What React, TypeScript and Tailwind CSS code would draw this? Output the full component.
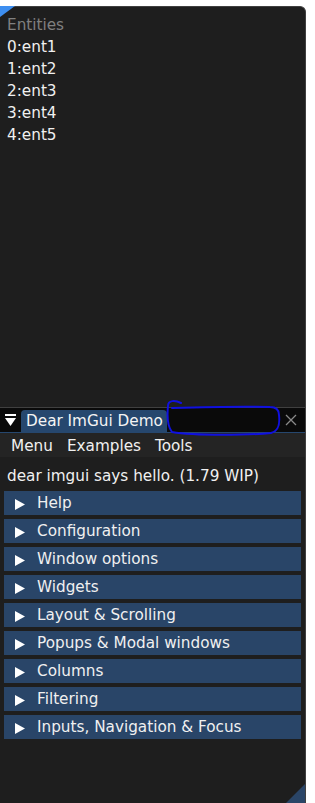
import React from "react";

const headers = [
  "Help",
  "Configuration",
  "Window options",
  "Widgets",
  "Layout & Scrolling",
  "Popups & Modal windows",
  "Columns",
  "Filtering",
  "Inputs, Navigation & Focus",
];

function Arrow() {
  return (
    <svg width="10" height="11" viewBox="0 0 10 11" className="shrink-0">
      <polygon points="0,0 10,5.5 0,11" fill="#ffffff" />
    </svg>
  );
}

export default function App() {
  return (
    <div className="relative w-[315px] h-[803px] bg-white overflow-hidden font-['DejaVu_Sans',sans-serif] text-[15.25px] text-[#f0f0f0]">
      <div className="h-[6px]" />
      {/* Top window */}
      <div className="relative w-[306px] h-[402px] bg-[#1e1e1e] border-t border-r border-b border-[#404040] rounded-tr-[6px] pt-[7px] pl-[7px] leading-[22px]">
        <div className="text-[#808080]">Entities</div>
        <div>0:ent1</div>
        <div>1:ent2</div>
        <div>2:ent3</div>
        <div>3:ent4</div>
        <div>4:ent5</div>
        <svg className="absolute left-0 top-[-1px]" width="16" height="12" viewBox="0 0 16 12">
          <polygon points="0,0 15,0 0,11" fill="#3d8ef0" />
        </svg>
      </div>
      {/* Bottom window */}
      <div className="relative w-[306px] h-[395px] bg-[#1e1e1e] border-r border-[#404040] flex flex-col">
        <div className="h-[24px] bg-[#0a0a0a] flex items-end shrink-0 pr-[6px]">
          <div className="w-[21px] h-[24px] flex flex-col items-center justify-center gap-[2px]">
            <div className="w-[11px] h-[2px] bg-white" />
            <svg width="11" height="8" viewBox="0 0 11 8">
              <polygon points="0,0 11,0 5.5,8" fill="#ffffff" />
            </svg>
          </div>
          <div className="h-[22px] w-[146px] bg-[#26476e] rounded-t-[4px] pl-[5px] flex items-center leading-none text-[#f4f4f4] pt-[1px]">
            Dear ImGui Demo
          </div>
          <div className="flex-1" />
          <div className="h-[24px] w-[16px] flex items-center justify-center">
            <svg width="12" height="12" viewBox="0 0 12 12">
              <path d="M1 1 L11 11 M11 1 L1 11" stroke="#8a8a8a" strokeWidth="1.3" />
            </svg>
          </div>
        </div>
        <div className="h-[1px] bg-[#26476e] shrink-0" />
        <div className="h-[24px] bg-[#242424] flex items-center shrink-0 leading-none pt-[3px]">
          <span className="ml-[11px]">Menu</span>
          <span className="ml-[14px]">Examples</span>
          <span className="ml-[14px]">Tools</span>
        </div>
        <div className="pt-[10px] pl-[7px] leading-[18px]">dear imgui says hello. (1.79 WIP)</div>
        <div className="mt-[6px] px-[4px] flex flex-col gap-[4px]">
          {headers.map((h) => (
            <div key={h} className="h-[24px] bg-[#294568] flex items-center pl-[11px] gap-[12px] leading-none pt-[2px]">
              <Arrow />
              <span>{h}</span>
            </div>
          ))}
        </div>
        <svg className="absolute right-0 bottom-0" width="19" height="19" viewBox="0 0 19 19">
          <polygon points="19,0 19,19 0,19" fill="#2a4567" />
        </svg>
      </div>
      {/* blue pen annotation */}
      <svg className="absolute left-0 top-0 pointer-events-none" width="315" height="803" viewBox="0 0 315 803">
        <path
          d="M181,403 C175,400 168,400 168,406 C167,416 168,427 172,432 C195,436 250,435 271,433 C279,431 280,424 279,415 C279,410 277,407 270,407 C240,406 205,407 172,408"
          fill="none"
          stroke="#1010e0"
          strokeWidth="2"
          strokeLinecap="round"
        />
      </svg>
    </div>
  );
}
